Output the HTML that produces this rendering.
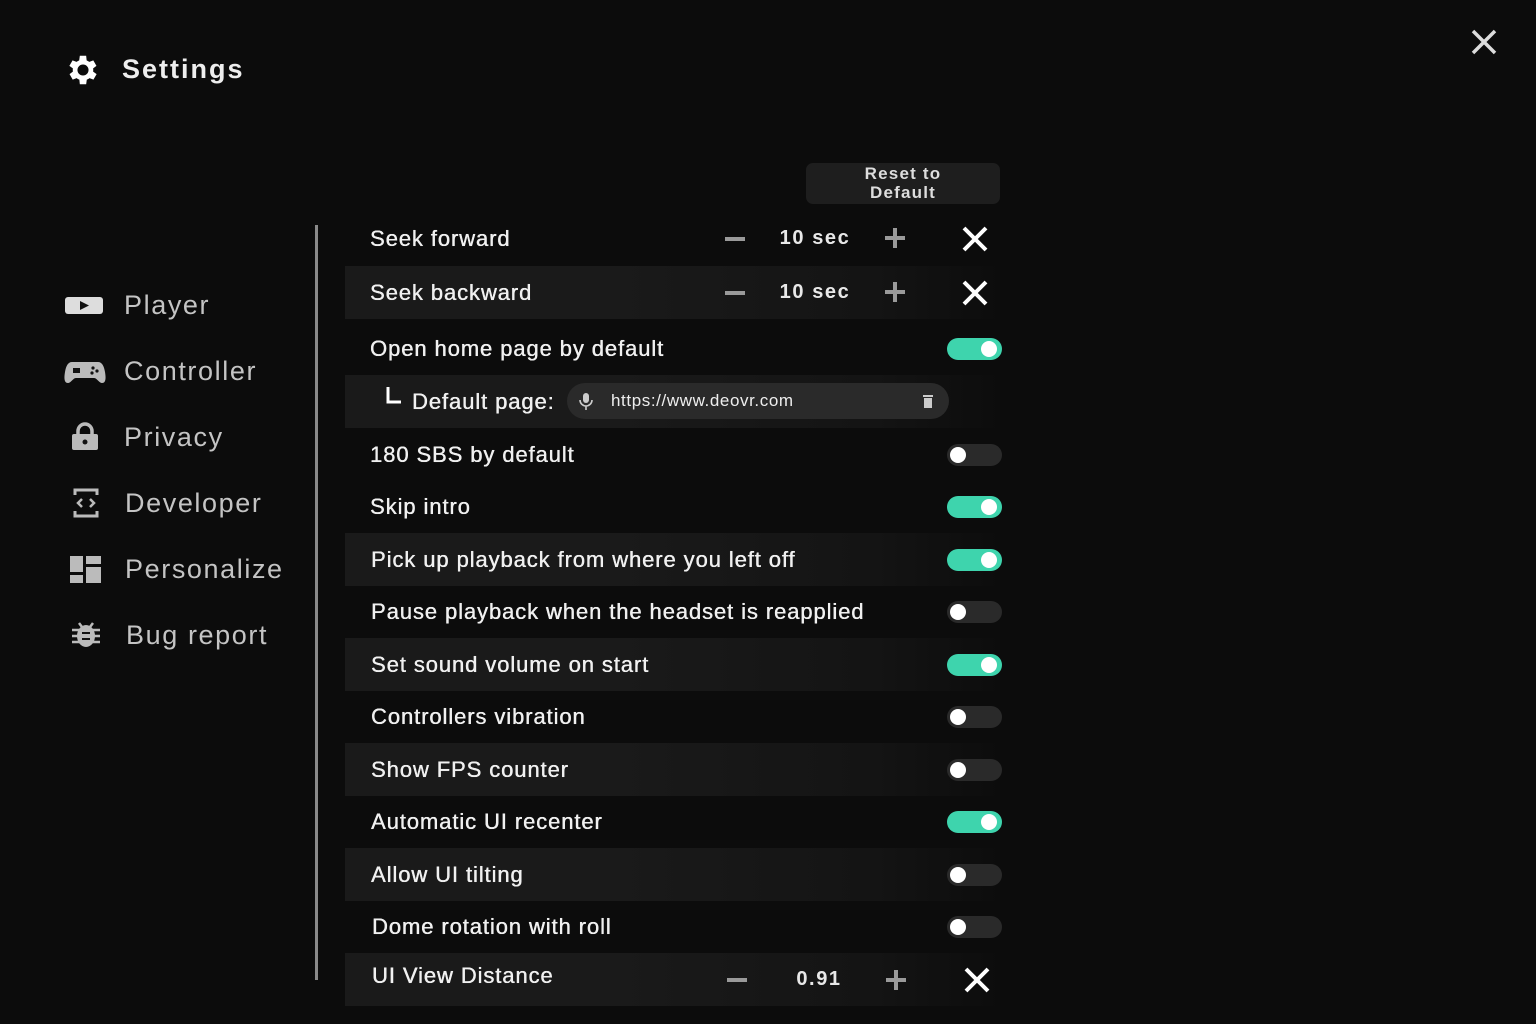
<!DOCTYPE html>
<html><head><style>
body{margin:0;width:1536px;height:1024px;background:#0c0c0c;font-family:"Liberation Sans",sans-serif;color:#e8e8e8;position:relative;overflow:hidden}
.abs{position:absolute}
.title{left:122px;top:54px;font-size:27px;font-weight:bold;letter-spacing:2px;color:#eee}
.nav{position:absolute;left:124px;font-size:27px;letter-spacing:1.6px;color:#c4c4c4}
.ic{position:absolute;left:64px}
.div{left:315px;top:225px;width:3px;height:755px;background:#8a8a8a}
.row{position:absolute;left:345px;width:660px;height:53px}
.hl{background:linear-gradient(90deg,#1a1a1a 0%,#1a1a1a 40%,#141414 80%,#0c0c0c 100%)}
.lbl{position:absolute;left:25px;top:0;line-height:53px;font-size:22px;letter-spacing:.9px;color:#f0f0f0;text-shadow:0 0 .4px #fff,.3px 0 0 #f0f0f0}
.tg{position:absolute;left:602px;top:16px;width:55px;height:22px;border-radius:11px;background:#2a2a2a}
.tg::after{content:"";position:absolute;left:3px;top:3px;width:16px;height:16px;border-radius:50%;background:#fff}
.tg.on{background:#3ed4ad}
.tg.on::after{left:34px}
.minus{position:absolute;left:380px;top:25px;width:20px;height:4px;background:#9a9a9a}
.val{position:absolute;left:420px;width:100px;text-align:center;line-height:53px;font-size:20px;font-weight:bold;letter-spacing:1.6px}
.plus{position:absolute;left:540px;top:16px;width:20px;height:20px}
.plus::before{content:"";position:absolute;left:0;top:8px;width:20px;height:4px;background:#9a9a9a}
.plus::after{content:"";position:absolute;left:8px;top:0;width:4px;height:20px;background:#9a9a9a}
.x{position:absolute;left:615px;top:14px}
</style></head><body>
<svg class="abs" style="left:63px;top:51px" width="40" height="38" viewBox="0 0 24 24"><path fill="#fff" d="M19.4 13a7.5 7.5 0 0 0 0-2l2.1-1.6-2-3.5-2.5 1a7.4 7.4 0 0 0-1.7-1L15 3h-4l-.4 2.9a7.4 7.4 0 0 0-1.7 1l-2.5-1-2 3.5L6.6 11a7.5 7.5 0 0 0 0 2l-2.1 1.6 2 3.5 2.5-1c.5.4 1.1.8 1.7 1L11 21h4l.4-2.9c.6-.2 1.2-.6 1.7-1l2.5 1 2-3.5zM13 15.5a3.5 3.5 0 1 1 0-7 3.5 3.5 0 0 1 0 7z" transform="translate(-1 0)"/></svg>
<div class="abs title">Settings</div>
<svg class="abs" style="left:1470px;top:29px" width="28" height="26" viewBox="0 0 28 26"><path d="M3 2L25 24M25 2L3 24" stroke="#ddd" stroke-width="3.5"/></svg>

<svg class="ic" style="top:296px" width="40" height="20" viewBox="0 0 40 20"><rect x="1" y="1" width="38" height="17" rx="3" fill="#ddd"/><path d="M16 5l9 4.5-9 4.5z" fill="#111"/></svg>
<div class="nav" style="top:290px">Player</div>
<svg class="ic" style="top:360px" width="42" height="24" viewBox="0 0 42 24"><path d="M8 2h26c4 0 6 4 7 10s1 11-3 11c-3 0-5-5-8-5H12c-3 0-5 5-8 5-4 0-4-5-3-11S4 2 8 2z" fill="#bbb"/><rect x="9" y="8" width="7" height="5" fill="#111"/><circle cx="29" cy="8" r="1.6" fill="#111"/><circle cx="33" cy="11" r="1.6" fill="#111"/><circle cx="28" cy="13" r="1.6" fill="#111"/></svg>
<div class="nav" style="top:356px">Controller</div>
<svg class="ic" style="left:70px;top:422px" width="30" height="30" viewBox="0 0 30 30"><path d="M8 12V9a7 7 0 0 1 14 0v3" stroke="#bbb" stroke-width="3.5" fill="none"/><rect x="2" y="12" width="26" height="16" rx="2" fill="#bbb"/><circle cx="15" cy="20" r="2.5" fill="#111"/></svg>
<div class="nav" style="top:422px">Privacy</div>
<svg class="ic" style="left:72px;top:487px" width="28" height="32" viewBox="0 0 28 32"><path d="M3 8V3h22v5M3 24v5h22v-5" stroke="#bbb" stroke-width="3" fill="none"/><path d="M10 12l-4 4 4 4M18 12l4 4-4 4" stroke="#bbb" stroke-width="2.5" fill="none"/></svg>
<div class="nav" style="top:488px;left:125px">Developer</div>
<svg class="ic" style="left:70px;top:556px" width="32" height="27" viewBox="0 0 32 27"><rect x="0" y="0" width="13" height="16" fill="#bbb"/><rect x="0" y="19" width="13" height="8" fill="#bbb"/><rect x="16" y="0" width="15" height="8" fill="#bbb"/><rect x="16" y="11" width="15" height="16" fill="#bbb"/></svg>
<div class="nav" style="top:554px;left:125px">Personalize</div>
<svg class="ic" style="left:70px;top:621px" width="32" height="28" viewBox="0 0 32 28"><ellipse cx="16" cy="15" rx="9" ry="11" fill="#bbb"/><path d="M2 9h28M2 15h28M2 21h28M9 2l3 4M23 2l-3 4" stroke="#bbb" stroke-width="2.5"/><path d="M12 12h8M12 18h8" stroke="#111" stroke-width="2"/></svg>
<div class="nav" style="top:620px;left:126px">Bug report</div>

<div class="abs div"></div>

<div class="abs" style="left:806px;top:163px;width:194px;height:40px;border-radius:7px;background:#1e1e1e;text-align:center;font-size:17px;font-weight:bold;line-height:19px;letter-spacing:1.2px;color:#ddd;padding-top:1px">Reset to<br>Default</div>

<div class="row" style="top:212px"><div class="lbl">Seek forward</div><div class="minus"></div><div class="val">10 sec</div><div class="plus"></div><svg class="x" width="30" height="26" viewBox="0 0 30 26"><path d="M4 2L26 24M26 2L4 24" stroke="#fff" stroke-width="4"/></svg></div>
<div class="row hl" style="top:266px"><div class="lbl">Seek backward</div><div class="minus"></div><div class="val">10 sec</div><div class="plus"></div><svg class="x" width="30" height="26" viewBox="0 0 30 26"><path d="M4 2L26 24M26 2L4 24" stroke="#fff" stroke-width="4"/></svg></div>
<div class="row" style="top:322px"><div class="lbl">Open home page by default</div><div class="tg on"></div></div>
<div class="row hl" style="top:375px"><svg class="abs" style="left:40px;top:12px" width="20" height="22"><path d="M3 0v15h13" stroke="#fff" stroke-width="3" fill="none"/></svg><div class="lbl" style="left:67px">Default page:</div>
<div class="abs" style="left:222px;top:8px;width:382px;height:36px;border-radius:18px;background:#2a2a2a">
<svg class="abs" style="left:12px;top:9px" width="14" height="18"><rect x="4" y="1" width="6" height="10" rx="3" fill="#ccc"/><path d="M1 8a6 6 0 0 0 12 0M7 14v4" stroke="#ccc" stroke-width="1.6" fill="none"/></svg>
<div class="abs" style="left:44px;top:0;line-height:36px;font-size:17px;letter-spacing:.6px;color:#eee">https://www.deovr.com</div>
<svg class="abs" style="left:355px;top:11px" width="12" height="14"><rect x="1" y="1" width="10" height="2" fill="#ccc"/><rect x="2" y="4" width="8" height="10" fill="#ccc"/></svg></div></div>
<div class="row" style="top:428px"><div class="lbl">180 SBS by default</div><div class="tg"></div></div>
<div class="row" style="top:480px"><div class="lbl">Skip intro</div><div class="tg on"></div></div>
<div class="row hl" style="top:533px"><div class="lbl" style="left:26px">Pick up playback from where you left off</div><div class="tg on"></div></div>
<div class="row" style="top:585px"><div class="lbl" style="left:26px">Pause playback when the headset is reapplied</div><div class="tg"></div></div>
<div class="row hl" style="top:638px"><div class="lbl" style="left:26px">Set sound volume on start</div><div class="tg on"></div></div>
<div class="row" style="top:690px"><div class="lbl" style="left:26px">Controllers vibration</div><div class="tg"></div></div>
<div class="row hl" style="top:743px"><div class="lbl" style="left:26px">Show FPS counter</div><div class="tg"></div></div>
<div class="row" style="top:795px"><div class="lbl" style="left:26px">Automatic UI recenter</div><div class="tg on"></div></div>
<div class="row hl" style="top:848px"><div class="lbl" style="left:26px">Allow UI tilting</div><div class="tg"></div></div>
<div class="row" style="top:900px"><div class="lbl" style="left:27px">Dome rotation with roll</div><div class="tg"></div></div>
<div class="row hl" style="top:953px"><div class="lbl" style="left:27px;line-height:45px">UI View Distance</div><div class="minus" style="left:382px"></div><div class="val" style="left:424px">0.91</div><div class="plus" style="left:541px;top:17px"></div><svg class="x" style="left:617px" width="30" height="26" viewBox="0 0 30 26"><path d="M4 2L26 24M26 2L4 24" stroke="#fff" stroke-width="4"/></svg></div>
</body></html>
